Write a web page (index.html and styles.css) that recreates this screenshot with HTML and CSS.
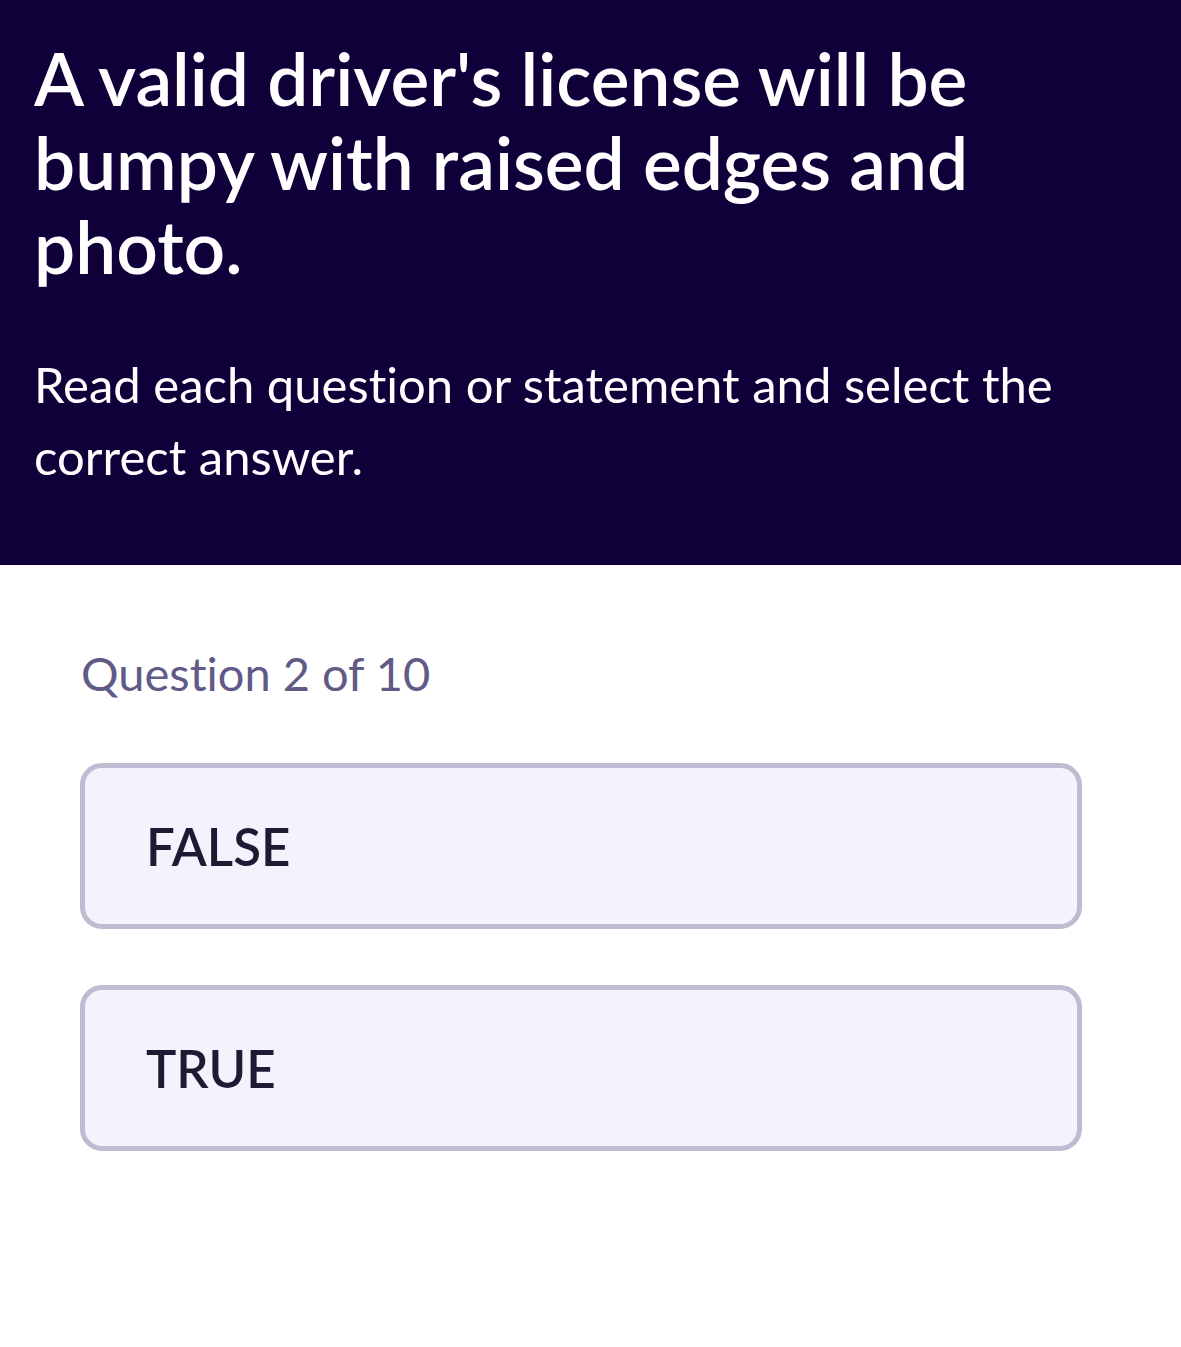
FILE: index.html
```html
<!DOCTYPE html>
<html lang="en">
<head>
    <meta charset="UTF-8">
    <meta name="viewport" content="width=device-width, initial-scale=1.0">
    <title>Quiz</title>
    <link rel="stylesheet" href="styles.css">
</head>
<body>

<div class="header">
    <h1 class="title">A valid driver's license will be bumpy with raised edges and photo.</h1>
    <p class="intro">Read each question or statement and select the correct answer.</p>
</div>

<div class="quiz">
    <p class="counter">Question 2 of 10</p>
    <div class="answers">
        <button class="answer">FALSE</button>
        <button class="answer">TRUE</button>
    </div>
</div>

</body>
</html>
```

FILE: styles.css
```css
body {
    margin: 0;
    font-family: Lato, "Open Sans", sans-serif;
    font-variant-ligatures: none;
    background: white;
}
.header {
    background-color: #10003a;
    color: white;
    padding: 36px 34px 73px;
}
.title {
    margin: 0;
    font-size: 73px;
    line-height: 84px;
    font-weight: 600;
    max-width: 1000px;
}
.intro {
    margin: 60px 0 0;
    font-size: 49px;
    line-height: 72px;
    max-width: 1100px;
}
.quiz {
    padding: 78px 99px 0 80px;
}
.counter {
    margin: 0 0 0 1px;
    font-size: 47px;
    line-height: 60px;
    color: #5f5b86;
}
.answers {
    display: flex;
    flex-direction: column;
    gap: 56px;
    margin-top: 60px;
}
.answer {
    height: 166px;
    text-align: left;
    padding: 0 0 0 61px;
    background: #f3f3fd;
    border: 5px solid #bebcd0;
    border-radius: 22px;
    font-family: inherit;
    font-size: 51px;
    font-weight: 600;
    color: #1c1b33;
}
```
